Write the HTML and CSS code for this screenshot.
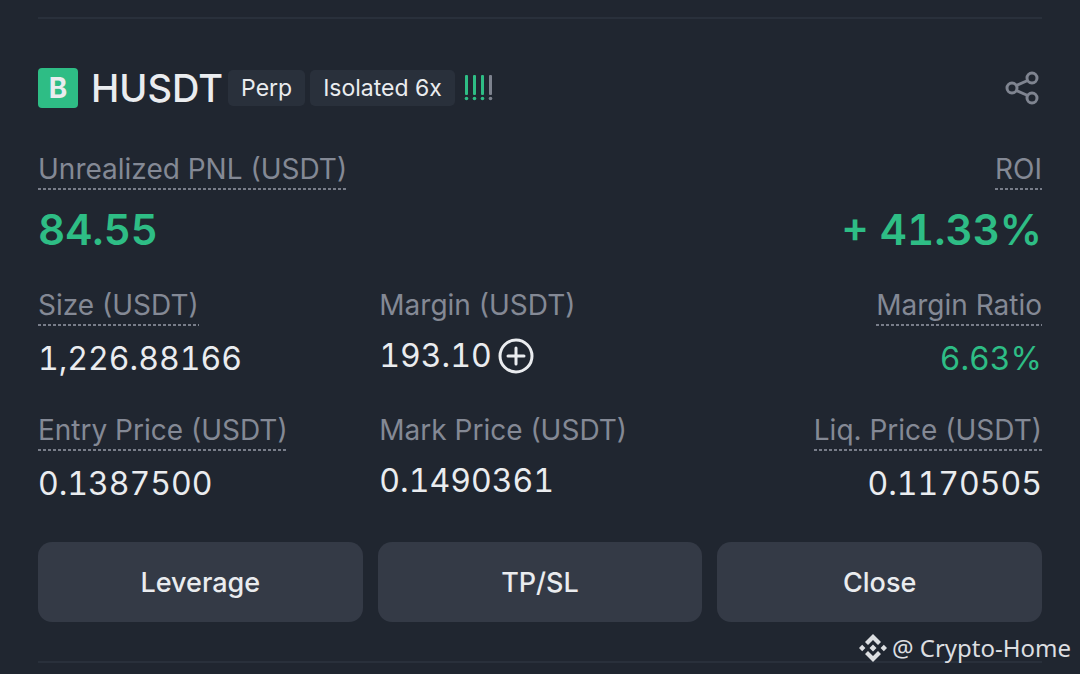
FILE: index.html
```html
<!DOCTYPE html>
<html lang="en">
<head>
<meta charset="utf-8">
<meta name="viewport" content="width=device-width, initial-scale=1">
<title>HUSDT Perp position</title>
<link rel="stylesheet" href="styles.css">
</head>
<body>
<main class="position">
  <header class="head">
    <span class="side">B</span>
    <h1 class="symbol">HUSDT</h1>
    <span class="tag">Perp</span>
    <span class="tag">Isolated 6x</span>
    <svg class="risk" viewBox="0 0 30 28" aria-label="Risk level 3 of 4" role="img">
      <g fill="#2ebd85">
        <rect x="1" y="1" width="3" height="20" rx="1"/><circle cx="2.500" cy="24.500" r="1.800"/>
        <rect x="9" y="1" width="3" height="20" rx="1"/><circle cx="10.500" cy="24.500" r="1.800"/>
        <rect x="17" y="1" width="3" height="20" rx="1"/><circle cx="18.500" cy="24.500" r="1.800"/>
      </g>
      <g fill="#7d828e"><rect x="25" y="1" width="3" height="20" rx="1"/><circle cx="26.500" cy="24.500" r="1.800"/></g>
    </svg>
    <button class="icon-button share" type="button" aria-label="Share">
      <svg viewBox="0 0 36 36" width="36" height="36" fill="none" stroke="#7f8490" stroke-width="3">
        <circle cx="8" cy="18" r="5"/><circle cx="28" cy="8" r="5"/><circle cx="28" cy="28" r="5"/>
        <path d="M12.500 15.500 23.700 10.500M12.500 20.500 23.700 25.500"/>
      </svg>
    </button>
  </header>

  <dl class="summary">
    <div class="field"><dt class="label hint">Unrealized PNL (USDT)</dt><dd class="value big up">84.55</dd></div>
    <div class="field end"><dt class="label hint">ROI</dt><dd class="value big up">+ 41.33%</dd></div>
  </dl>

  <dl class="details">
    <div class="field"><dt class="label hint">Size (USDT)</dt><dd class="value">1,226.88166</dd></div>
    <div class="field"><dt class="label">Margin (USDT)</dt>
      <dd class="value with-icon">193.10
        <button class="icon-button" type="button" aria-label="Add margin">
          <svg viewBox="0 0 36 36" width="36" height="36" fill="none" stroke="#eaecef" stroke-width="3">
            <circle cx="18" cy="18" r="16"/><path d="M18 10v16M10 18h16" stroke-linecap="round"/>
          </svg>
        </button>
      </dd></div>
    <div class="field end"><dt class="label hint">Margin Ratio</dt><dd class="value up">6.63%</dd></div>
    <div class="field"><dt class="label hint">Entry Price (USDT)</dt><dd class="value">0.1387500</dd></div>
    <div class="field"><dt class="label">Mark Price (USDT)</dt><dd class="value">0.1490361</dd></div>
    <div class="field end"><dt class="label hint">Liq. Price (USDT)</dt><dd class="value">0.1170505</dd></div>
  </dl>

  <div class="actions">
    <button class="action" type="button">Leverage</button>
    <button class="action" type="button">TP/SL</button>
    <button class="action" type="button">Close</button>
  </div>
</main>
<div class="credit">
  <svg viewBox="0 0 28 28" width="28" height="28" fill="#dcdee1" aria-hidden="true">
    <path d="M14 0 22 8 19 11 14 6 9 11 6 8ZM14 28 22 20 19 17 14 22 9 17 6 20ZM14 10.500 17.500 14 14 17.500 10.500 14ZM3.200 10.800 6.400 14 3.200 17.200 0 14ZM24.800 10.800 28 14 24.800 17.200 21.600 14Z"/>
  </svg>
  <span>@ Crypto-Home</span>
</div>
</body>
</html>
```
FILE: styles.css
```css
* { box-sizing: border-box; }

body {
  margin: 0;
  background: #202630;
  color: #eaecef;
  font-family: Inter, "Liberation Sans", sans-serif;
}

.position {
  margin: 17px 38px 0;
  padding: 49px 0 39px;
  border-top: 2px solid #29303b;
  border-bottom: 2px solid #29303b;
}

.head {
  display: flex;
  align-items: center;
  height: 40px;
}

.side {
  width: 40px;
  height: 40px;
  border-radius: 4px;
  background: #2ebd85;
  font-size: 28px;
  font-weight: 700;
  line-height: 40px;
  text-align: center;
}

.symbol {
  margin: 0 5px 0 13px;
  font-size: 38px;
  font-weight: 500;
  line-height: 40px;
}

.tag {
  margin-right: 5px;
  padding: 0 13px;
  border-radius: 5px;
  background: #29303b;
  font-size: 23px;
  line-height: 36px;
}

.risk {
  width: 30px;
  height: 28px;
  margin-left: 4px;
}

.icon-button {
  display: flex;
  padding: 0;
  border: 0;
  background: none;
  cursor: pointer;
}

.share {
  margin-left: auto;
  padding-right: 2px;
}

.summary,
.details { margin: 0; }

.summary {
  display: flex;
  justify-content: space-between;
  margin-top: 43px;
}

.details {
  display: grid;
  grid-template-columns: repeat(3, 1fr);
  gap: 33px 20px;
  margin-top: 30px;
}

.field {
  display: flex;
  flex-direction: column;
  align-items: flex-start;
}

.end { align-items: flex-end; }

.label {
  color: #848995;
  font-size: 28px;
  line-height: 36px;
  white-space: nowrap;
}

.hint {
  padding-bottom: 3px;
  background: repeating-linear-gradient(90deg, #787d89 0 3px, transparent 3px 5px) left bottom / 100% 2px no-repeat;
}

.value {
  margin: 13px 0 0;
  font-size: 32px;
  line-height: 40px;
  font-variant-numeric: tabular-nums;
}

.big {
  font-size: 42px;
  font-weight: 600;
  line-height: 54px;
}

.up { color: #2ebd85; }

.with-icon {
  display: flex;
  align-items: center;
  gap: 6px;
}

.actions {
  display: grid;
  grid-template-columns: repeat(3, 1fr);
  gap: 15px;
  margin-top: 38px;
}

.action {
  height: 80px;
  padding: 2px 0 0;
  border: 0;
  border-radius: 14px;
  background: #343a46;
  color: inherit;
  font: 500 27px/36px Inter, "Liberation Sans", sans-serif;
  cursor: pointer;
}

.credit {
  position: absolute;
  right: 9px;
  bottom: 8px;
  display: flex;
  align-items: center;
  gap: 5px;
  color: #dcdee1;
  font: 24px/36px "Noto Sans", sans-serif;
}
```
